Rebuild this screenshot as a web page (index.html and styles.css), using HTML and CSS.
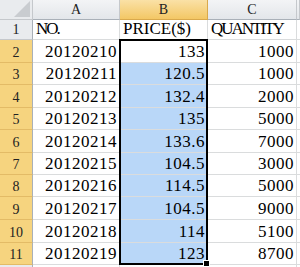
FILE: index.html
```html
<!DOCTYPE html>
<html lang="en">
<head>
  <meta charset="UTF-8">
  <title>Sheet</title>
  <link rel="stylesheet" href="styles.css">
</head>
<body>
<div class="wrap">
  <div class="sheet">
    <div class="head corner">
      <svg width="16" height="16" viewBox="0 0 16 16"><polygon points="16,0 16,16 0,16" fill="#c9ccd0"/></svg>
    </div>
    <div class="head col">A</div>
    <div class="head col on">B</div>
    <div class="head col">C</div>
    <div class="head col"></div>

    <div class="head row">1</div>
    <div class="cell label narrow">NO.</div>
    <div class="cell label">PRICE($)</div>
    <div class="cell label tight">QUANTITY</div>
    <div class="cell"></div>

    <div class="head row on">2</div>
    <div class="cell num">20120210</div>
    <div class="cell num active">133</div>
    <div class="cell num">1000</div>
    <div class="cell"></div>

    <div class="head row on">3</div>
    <div class="cell num">20120211</div>
    <div class="cell num sel">120.5</div>
    <div class="cell num">1000</div>
    <div class="cell"></div>

    <div class="head row on">4</div>
    <div class="cell num">20120212</div>
    <div class="cell num sel">132.4</div>
    <div class="cell num">2000</div>
    <div class="cell"></div>

    <div class="head row on">5</div>
    <div class="cell num">20120213</div>
    <div class="cell num sel">135</div>
    <div class="cell num">5000</div>
    <div class="cell"></div>

    <div class="head row on">6</div>
    <div class="cell num">20120214</div>
    <div class="cell num sel">133.6</div>
    <div class="cell num">7000</div>
    <div class="cell"></div>

    <div class="head row on">7</div>
    <div class="cell num">20120215</div>
    <div class="cell num sel">104.5</div>
    <div class="cell num">3000</div>
    <div class="cell"></div>

    <div class="head row on">8</div>
    <div class="cell num">20120216</div>
    <div class="cell num sel">114.5</div>
    <div class="cell num">5000</div>
    <div class="cell"></div>

    <div class="head row on">9</div>
    <div class="cell num">20120217</div>
    <div class="cell num sel">104.5</div>
    <div class="cell num">9000</div>
    <div class="cell"></div>

    <div class="head row on">10</div>
    <div class="cell num">20120218</div>
    <div class="cell num sel">114</div>
    <div class="cell num">5100</div>
    <div class="cell"></div>

    <div class="head row on">11</div>
    <div class="cell num">20120219</div>
    <div class="cell num sel">123</div>
    <div class="cell num">8700</div>
    <div class="cell"></div>

    <div class="head row"></div>
    <div class="cell"></div>
    <div class="cell"></div>
    <div class="cell"></div>
    <div class="cell"></div>
  </div>
  <div class="selection"></div>
</div>
</body>
</html>
```

FILE: styles.css
```css
html,
body {
  width: 100%;
  height: 100%;
}
body {
  margin: 0;
  overflow: hidden;
  background: #fff;
}
.wrap {
  position: relative;
  width: 300px;
  height: 267px;
  overflow: hidden;
}
.sheet {
  display: grid;
  grid-template-columns: 33px 87px 88px 89px 3px;
  grid-template-rows: 20px 20px 23px 22px 23px 22px 23px 22px 22px 23px 23px 22px 3px;
  font-family: "Liberation Serif", serif;
  color: #000;
}
.head,
.cell {
  box-sizing: border-box;
  display: flex;
  align-items: flex-end;
  border-right: 1px solid #dadcdd;
  border-bottom: 1px solid #dadcdd;
  overflow: hidden;
  white-space: nowrap;
}
.head {
  justify-content: center;
  font-size: 14px;
  line-height: 1;
  padding-bottom: 2px;
  color: #222;
  border-color: #c5c8cc;
  background: #e9ebee;
}
.head.col {
  background: linear-gradient(#f3f4f6, #e3e6ea);
  border-bottom-color: #a9b0b8;
}
.head.col.on {
  background: linear-gradient(#fae1a6, #f3c765);
  border-color: #d9a94c;
}
.head.row {
  border-right-color: #a9b0b8;
}
.head.row.on {
  background: #f6d47f;
  border-bottom-color: #e3bb66;
}
.head.corner {
  justify-content: flex-end;
  padding: 0 2px 2px 0;
}
.cell {
  font-size: 17px;
  line-height: 1;
  padding: 0 2px 2px 3px;
}
.cell.num {
  justify-content: flex-end;
  letter-spacing: 0.5px;
}
.cell.label.narrow {
  letter-spacing: -2px;
}
.cell.label.tight {
  letter-spacing: -2px;
}
.cell.sel {
  background: #b9d7f8;
}
.selection {
  position: absolute;
  left: 119px;
  top: 39px;
  width: 89px;
  height: 226px;
  box-sizing: border-box;
  border: 2px solid #000;
}
.selection::after {
  content: "";
  position: absolute;
  right: -4px;
  bottom: -4px;
  width: 5px;
  height: 5px;
  background: #000;
  border: 1px solid #fff;
}
```
